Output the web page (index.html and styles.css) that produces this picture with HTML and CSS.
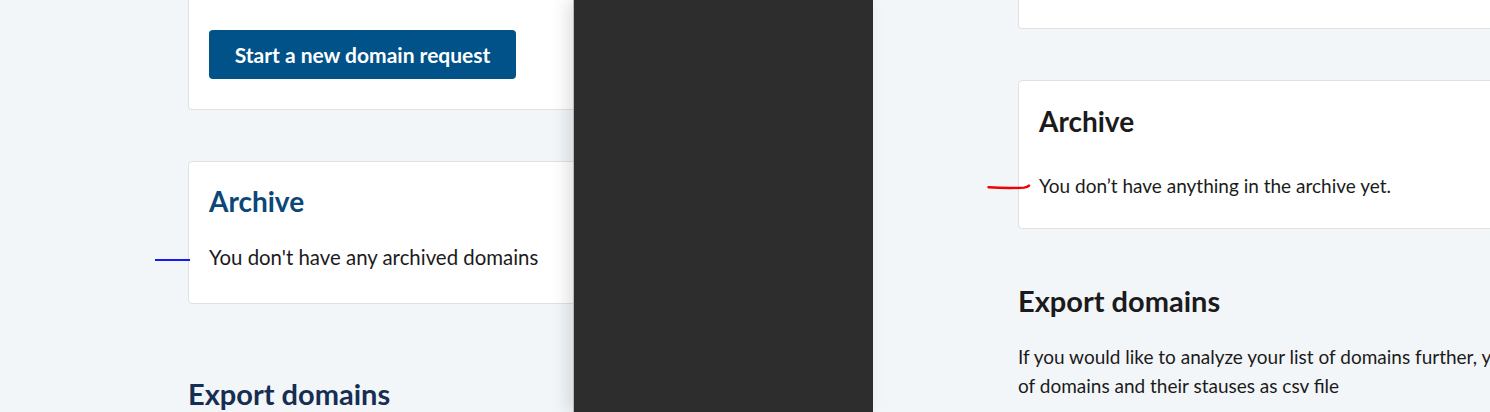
FILE: index.html
```html
<!DOCTYPE html>
<html lang="en">
<head>
<meta charset="utf-8">
<title>Archive comparison</title>
<link rel="stylesheet" href="styles.css">
</head>
<body>
<div class="screen">
  <section class="pane pane-left">
    <div class="card card-top">
      <button class="btn-primary" type="button">Start a new domain request</button>
    </div>
    <div class="card card-archive">
      <span class="mark-blue"></span>
      <h2 class="card-title card-title-blue">Archive</h2>
      <p class="card-text card-text-left">You don't have any archived domains</p>
    </div>
    <h2 class="section-title section-title-navy">Export domains</h2>
  </section>
  <div class="divider"></div>
  <section class="pane pane-right">
    <div class="card card-top-right"></div>
    <div class="card card-archive-right">
      <svg class="mark-red" width="46" height="10" viewBox="0 0 46 10"><path d="M1.5 6.2 Q 20 7.6 37 6.6 Q 40.5 6.2 42 4.6" fill="none" stroke="#f20000" stroke-width="2.4" stroke-linecap="round"/></svg>
      <h2 class="card-title card-title-black">Archive</h2>
      <p class="card-text card-text-right">You don’t have anything in the archive yet.</p>
    </div>
    <h2 class="section-title section-title-black">Export domains</h2>
    <p class="section-text">If you would like to analyze your list of domains further, you can download the list<br>of domains and their stauses as csv file</p>
  </section>
</div>
</body>
</html>
```

FILE: styles.css
```css
* { box-sizing: border-box; }
html, body { margin: 0; padding: 0; }
body {
  font-family: "Lato", "Liberation Sans", sans-serif;
  color: #1b1b1b;
  background: #f3f6f9;
}
.screen {
  display: flex;
  width: 1490px;
  height: 412px;
  overflow: hidden;
}
.pane {
  overflow: hidden;
  background: #f3f6f9;
  white-space: nowrap;
}
.pane-left {
  width: 573px;
  flex: none;
  padding-left: 188px;
}
.pane-right {
  flex: 1;
  padding-left: 145px;
}
.divider {
  width: 300px;
  flex: none;
  background: #2d2d2d;
  border-left: 1px solid #b9b9b9;
  box-shadow: -6px 0 16px rgba(0, 0, 0, 0.12);
  position: relative;
  z-index: 1;
}
.card {
  background: #fff;
  border: 1px solid #dfe1e2;
  border-radius: 4px;
  width: 720px;
  position: relative;
}
.card-top {
  border-top: none;
  border-radius: 0 0 4px 4px;
  padding: 30px 20px 30px;
}
.btn-primary {
  display: block;
  font-family: inherit;
  font-weight: 700;
  font-size: 21px;
  line-height: 25px;
  color: #fff;
  background: #005288;
  border: none;
  border-radius: 4px;
  padding: 12px 0;
  width: 307px;
  text-align: center;
}
.card-archive {
  margin-top: 51px;
  padding: 21px 20px 31px;
}
.card-top-right {
  border-top: none;
  border-radius: 0 0 4px 4px;
  height: 29px;
}
.card-archive-right {
  margin-top: 51px;
  padding: 22px 20px 29px;
}
.card-title {
  margin: 0;
  font-size: 28px;
  line-height: 36px;
  font-weight: 700;
}
.card-title-blue { color: #0b4778; }
.card-title-black { color: #1b1b1b; }
.card-text {
  margin: 0;
}
.card-text-left {
  margin-top: 23px;
  font-size: 20.4px;
  line-height: 30px;
}
.card-text-right {
  margin-top: 33px;
  font-size: 19px;
  line-height: 27px;
}
.mark-blue {
  position: absolute;
  left: -34px;
  top: 97px;
  width: 35px;
  height: 2px;
  background: #1616ff;
}
.mark-red {
  position: absolute;
  left: -32px;
  top: 100px;
}
.section-title {
  margin: 0;
  font-size: 29px;
  line-height: 36px;
  font-weight: 700;
}
.section-title-navy {
  margin-top: 72px;
  color: #162e51;
}
.section-title-black {
  margin-top: 54px;
  color: #1b1b1b;
}
.section-text {
  margin: 23px 0 0;
  font-size: 19px;
  line-height: 29px;
}
```
